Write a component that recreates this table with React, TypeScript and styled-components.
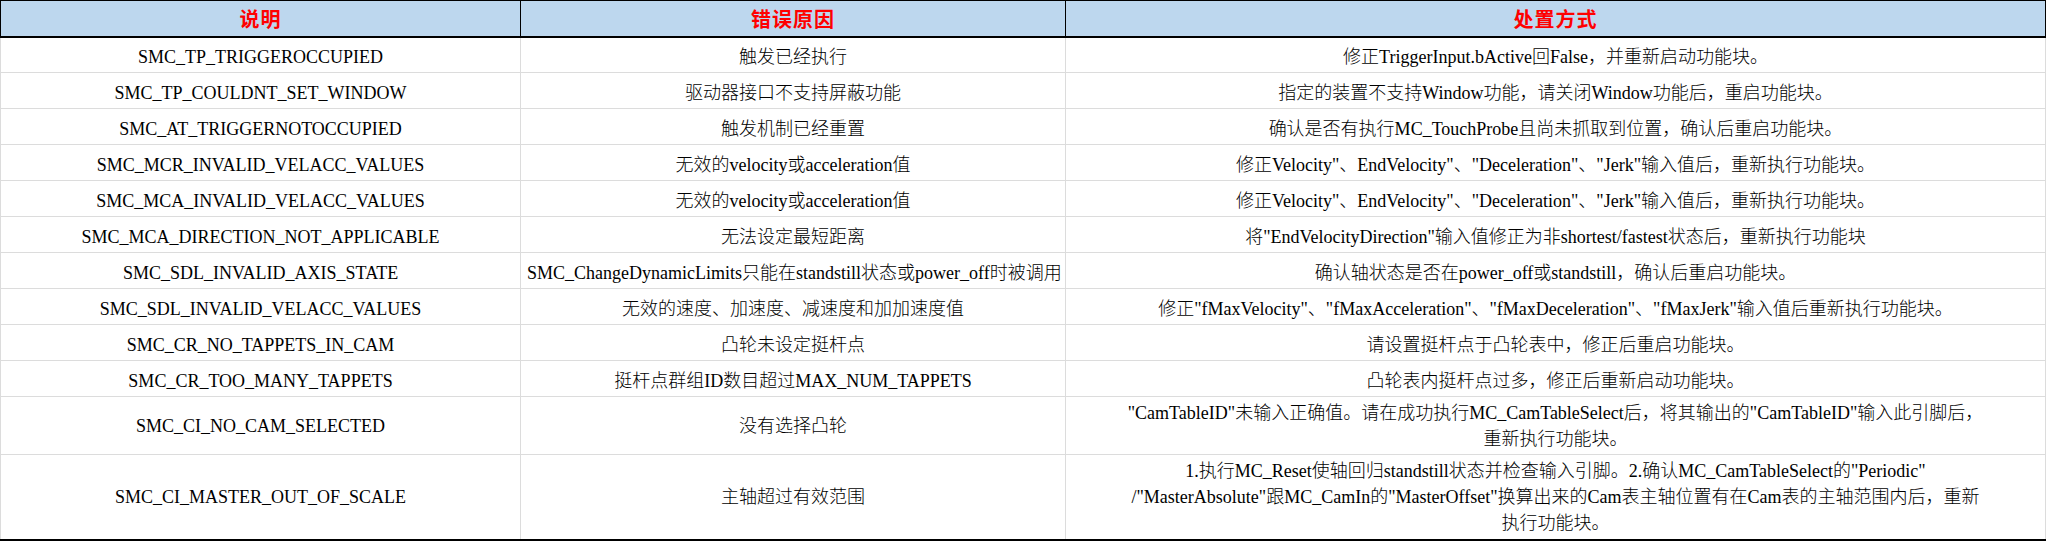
import React from 'react';
import styled, { createGlobalStyle } from 'styled-components';

const GlobalStyle = createGlobalStyle`
  html, body {
    margin: 0;
    padding: 0;
    background: #ffffff;
  }
`;

const Sheet = styled.table`
  width: 2045px;
  table-layout: fixed;
  border-collapse: collapse;
  font-family: 'Liberation Serif', 'Noto Sans CJK SC', serif;
  font-size: 18px;
  color: #000;
  border-bottom: 2px solid #000;
`;

const HeadRow = styled.tr`
  height: 36px;
  background: #bdd7ee;
`;

const HeadCell = styled.th`
  border: 1px solid #000;
  border-bottom: 2px solid #000;
  padding: 0;
  text-align: center;
  vertical-align: middle;
  color: #ff0000;
  font-family: 'Liberation Serif', 'Noto Sans CJK SC', serif;
  font-size: 20px;
  font-weight: 700;
  letter-spacing: 1px;
`;

const Row = styled.tr<{ $height: number }>`
  height: ${(p) => p.$height}px;
`;

const Cell = styled.td<{ $multi?: boolean }>`
  border: 1px solid #dcdcdc;
  padding: ${(p) => (p.$multi ? '0 6px' : '4px 6px 0')};
  text-align: center;
  vertical-align: middle;
  line-height: 26px;
  font-weight: 300;
  white-space: nowrap;
  overflow: hidden;
`;

type Item = {
  code: string;
  cause: string;
  fix: string[];
  height?: number;
};

const items: Item[] = [
  {
    code: 'SMC_TP_TRIGGEROCCUPIED',
    cause: '触发已经执行',
    fix: ['修正TriggerInput.bActive回False，并重新启动功能块。'],
  },
  {
    code: 'SMC_TP_COULDNT_SET_WINDOW',
    cause: '驱动器接口不支持屏蔽功能',
    fix: ['指定的装置不支持Window功能，请关闭Window功能后，重启功能块。'],
  },
  {
    code: 'SMC_AT_TRIGGERNOTOCCUPIED',
    cause: '触发机制已经重置',
    fix: ['确认是否有执行MC_TouchProbe且尚未抓取到位置，确认后重启功能块。'],
  },
  {
    code: 'SMC_MCR_INVALID_VELACC_VALUES',
    cause: '无效的velocity或acceleration值',
    fix: ['修正Velocity"、EndVelocity"、"Deceleration"、"Jerk"输入值后，重新执行功能块。'],
  },
  {
    code: 'SMC_MCA_INVALID_VELACC_VALUES',
    cause: '无效的velocity或acceleration值',
    fix: ['修正Velocity"、EndVelocity"、"Deceleration"、"Jerk"输入值后，重新执行功能块。'],
  },
  {
    code: 'SMC_MCA_DIRECTION_NOT_APPLICABLE',
    cause: '无法设定最短距离',
    fix: ['将"EndVelocityDirection"输入值修正为非shortest/fastest状态后，重新执行功能块'],
  },
  {
    code: 'SMC_SDL_INVALID_AXIS_STATE',
    cause: 'SMC_ChangeDynamicLimits只能在standstill状态或power_off时被调用',
    fix: ['确认轴状态是否在power_off或standstill，确认后重启功能块。'],
  },
  {
    code: 'SMC_SDL_INVALID_VELACC_VALUES',
    cause: '无效的速度、加速度、减速度和加加速度值',
    fix: ['修正"fMaxVelocity"、"fMaxAcceleration"、"fMaxDeceleration"、"fMaxJerk"输入值后重新执行功能块。'],
  },
  {
    code: 'SMC_CR_NO_TAPPETS_IN_CAM',
    cause: '凸轮未设定挺杆点',
    fix: ['请设置挺杆点于凸轮表中，修正后重启功能块。'],
  },
  {
    code: 'SMC_CR_TOO_MANY_TAPPETS',
    cause: '挺杆点群组ID数目超过MAX_NUM_TAPPETS',
    fix: ['凸轮表内挺杆点过多，修正后重新启动功能块。'],
  },
  {
    code: 'SMC_CI_NO_CAM_SELECTED',
    cause: '没有选择凸轮',
    fix: [
      '"CamTableID"未输入正确值。请在成功执行MC_CamTableSelect后，将其输出的"CamTableID"输入此引脚后，',
      '重新执行功能块。',
    ],
    height: 58,
  },
  {
    code: 'SMC_CI_MASTER_OUT_OF_SCALE',
    cause: '主轴超过有效范围',
    fix: [
      '1.执行MC_Reset使轴回归standstill状态并检查输入引脚。2.确认MC_CamTableSelect的"Periodic"',
      '/"MasterAbsolute"跟MC_CamIn的"MasterOffset"换算出来的Cam表主轴位置有在Cam表的主轴范围内后，重新',
      '执行功能块。',
    ],
    height: 85,
  },
];

function App() {
  return (
    <>
      <GlobalStyle />
      <Sheet>
        <colgroup>
          <col style={{ width: 520 }} />
          <col style={{ width: 545 }} />
          <col style={{ width: 980 }} />
        </colgroup>
        <thead>
          <HeadRow>
            <HeadCell>说明</HeadCell>
            <HeadCell>错误原因</HeadCell>
            <HeadCell>处置方式</HeadCell>
          </HeadRow>
        </thead>
        <tbody>
          {items.map((item) => {
            const multi = item.fix.length > 1;
            return (
              <Row key={item.code} $height={item.height ?? 36}>
                <Cell $multi={multi}>{item.code}</Cell>
                <Cell $multi={multi}>{item.cause}</Cell>
                <Cell $multi={multi}>
                  {item.fix.map((line, i) => (
                    <React.Fragment key={i}>
                      {i > 0 && <br />}
                      {line}
                    </React.Fragment>
                  ))}
                </Cell>
              </Row>
            );
          })}
        </tbody>
      </Sheet>
    </>
  );
}

export default App;
